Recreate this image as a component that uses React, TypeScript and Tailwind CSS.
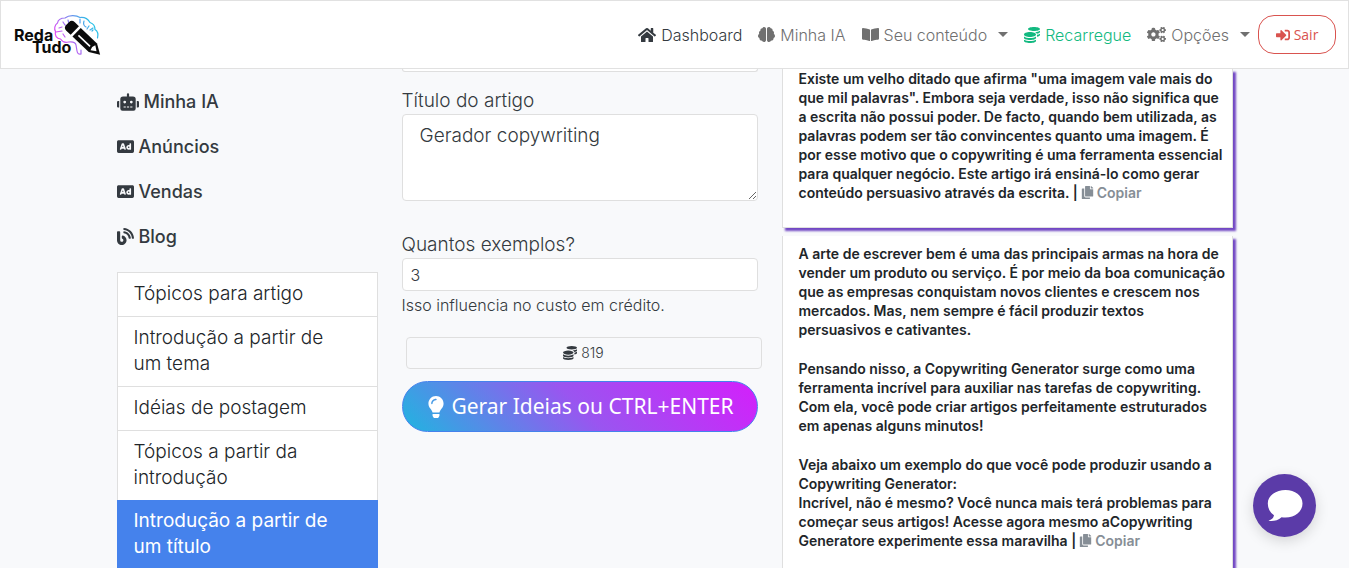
import { ReactNode } from "react";
import {
	FaAd,
	FaBlog,
	FaBookOpen,
	FaBrain,
	FaCogs,
	FaCoins,
	FaCopy,
	FaHome,
	FaLightbulb,
	FaRobot,
	FaSignInAlt,
} from "react-icons/fa";

const sections = [
	{ label: "Minha IA", icon: <FaRobot className="w-[22px] h-[18px]" /> },
	{ label: "Anúncios", icon: <FaAd className="size-[17px]" /> },
	{ label: "Vendas", icon: <FaAd className="size-[17px]" /> },
	{ label: "Blog", icon: <FaBlog className="size-[17px]" /> },
];

const blogTools = [
	"Tópicos para artigo",
	"Introdução a partir de um tema",
	"Idéias de postagem",
	"Tópicos a partir da introdução",
	"Introdução a partir de um título",
];

const firstResult = [
	`Existe um velho ditado que afirma "uma imagem vale mais do
que mil palavras". Embora seja verdade, isso não significa que
a escrita não possui poder. De facto, quando bem utilizada, as
palavras podem ser tão convincentes quanto uma imagem. É
por esse motivo que o copywriting é uma ferramenta essencial
para qualquer negócio. Este artigo irá ensiná-lo como gerar
conteúdo persuasivo através da escrita. |`,
];

const secondResult = [
	`A arte de escrever bem é uma das principais armas na hora de
vender um produto ou serviço. É por meio da boa comunicação
que as empresas conquistam novos clientes e crescem nos
mercados. Mas, nem sempre é fácil produzir textos
persuasivos e cativantes.`,
	`Pensando nisso, a Copywriting Generator surge como uma
ferramenta incrível para auxiliar nas tarefas de copywriting.
Com ela, você pode criar artigos perfeitamente estruturados
em apenas alguns minutos!`,
	`Veja abaixo um exemplo do que você pode produzir usando a
Copywriting Generator:
Incrível, não é mesmo? Você nunca mais terá problemas para
começar seus artigos! Acesse agora mesmo aCopywriting
Generatore experimente essa maravilha |`,
];

function Logo() {
	return (
		<svg width="88" height="42" viewBox="0 0 88 42" role="img" aria-label="Reda Tudo">
			<defs>
				<linearGradient id="brain" gradientUnits="userSpaceOnUse" x1="46" y1="26" x2="78" y2="6">
					<stop offset="0" stopColor="#e04bf5" />
					<stop offset="0.45" stopColor="#8f7cf0" />
					<stop offset="1" stopColor="#22c3e6" />
				</linearGradient>
			</defs>
			<g fill="none" stroke="url(#brain)" strokeWidth="1.2" strokeLinecap="round">
				<path d="M84.500 24c1-4 0-7-2.500-8.500 0-3.500-2-6-5-7C75 5 71 3 67 3.500 63 1 56 1 52 4c-4 0-7 2-7.500 5-3 2-3.500 6-2 8.500-1 4 1 7 5 7.500 2 3 5 4 8 3 4-.5 7 0 7.500 3l1 6c.5 3 2 3.500 4 3v-4" />
				<path d="M50 8l2 3 3 1M55 6l1 4M43 18l6-1M50 20l2 3M46 14l3-1M67 5v4M71 7c-1 3 0 5 2 6M76 12l-2 3M77 16l3-2M79 17l1-1" />
			</g>
			<g transform="translate(56 11) rotate(43.6)">
				<path d="M2-6h6V6H2a4 4 0 0 1-4-4v-4a4 4 0 0 1 4-4Z" fill="#0b0b0b" />
				<path d="M10.500-6H33l10 6-10 6H10.500Z" fill="#0b0b0b" />
				<path d="M14 1h16" stroke="#fff" strokeWidth="1.600" />
				<path d="M33-3.500l5 3.500-5 3.500-1-3.500Z" fill="#fff" />
			</g>
			<g fill="#0b0b0b" fontFamily="Inter, sans-serif" fontWeight="700" fontSize="16">
				<text x="1" y="27">Reda</text>
				<text x="19" y="39">Tudo</text>
			</g>
		</svg>
	);
}

function NavItem({
	icon,
	children,
	className = "text-[#707070]",
	caret = false,
}: {
	icon: ReactNode;
	children: ReactNode;
	className?: string;
	caret?: boolean;
}) {
	return (
		<a href="#" className={`flex items-center gap-[5px] px-2 whitespace-nowrap ${className}`}>
			{icon}
			<span>{children}</span>
			{caret && <span className="ml-1.5 border-x-5 border-t-5 border-x-transparent" />}
		</a>
	);
}

function Result({ paragraphs, className = "" }: { paragraphs: string[]; className?: string }) {
	return (
		<article
			className={`border border-t-0 border-[#dfdfdf] bg-white px-4 shadow-[3px_3px_2px_#7248c4] text-sm leading-[19px] font-semibold text-[#212529] flex flex-col gap-5 ${className}`}
		>
			{paragraphs.map((text, i) => {
				const lines = text.split("\n");
				return (
					<p key={i} className="whitespace-nowrap">
						{lines.map((line, j) => (
							<span key={j} className="flex items-center gap-[3px]">
								<span>{line}</span>
								{i === paragraphs.length - 1 && j === lines.length - 1 && (
									<button className="flex items-center gap-[3px] text-[#868e96]">
										<FaCopy className="size-[13px]" />
										Copiar
									</button>
								)}
							</span>
						))}
					</p>
				);
			})}
		</article>
	);
}

export default function App() {
	return (
		<div className="flex flex-col h-screen overflow-hidden bg-[#f8f9fb] font-['Inter',sans-serif] text-[#343a40]">
			<header className="relative z-10 flex shrink-0 items-center justify-between h-[69px] px-3 bg-white border border-[#e1e1e1]">
				<a href="#">
					<Logo />
				</a>
				<nav className="flex items-center text-base font-light">
					<NavItem icon={<FaHome className="size-[18px]" />} className="text-[#343a40]">
						Dashboard
					</NavItem>
					<NavItem icon={<FaBrain className="size-[17px]" />}>Minha IA</NavItem>
					<NavItem icon={<FaBookOpen className="size-[17px]" />} caret>
						Seu conteúdo
					</NavItem>
					<NavItem icon={<FaCoins className="size-4" />} className="text-[#12b980]">
						Recarregue
					</NavItem>
					<NavItem icon={<FaCogs className="size-[19px]" />} caret>
						Opções
					</NavItem>
					<button className="flex items-center justify-center gap-1 w-[78px] h-[39px] rounded-[16px] border border-[#d9534f] text-[#d9534f] text-sm font-normal font-['Open_Sans',sans-serif]">
						<FaSignInAlt className="size-3.5" />
						Sair
					</button>
				</nav>
			</header>

			<main className="grid grid-cols-12 w-full max-w-[1140px] mx-auto flex-1 min-h-0">
				<aside className="col-span-3 px-3 pt-2.5">
					{sections.map(({ label, icon }) => (
						<a key={label} href="#" className="flex items-center gap-[5px] h-[45px] text-lg font-medium">
							{icon}
							{label}
						</a>
					))}
					<ul className="mt-[13px] border border-[#dfdfdf] bg-white text-[19px] leading-[26px] font-light text-[#212529]">
						{blogTools.map((tool, i) => (
							<li
								key={tool}
								className={
									i === blogTools.length - 1
										? "-mx-px -mt-px px-px bg-[#4582ec] text-white font-normal"
										: "border-b border-[#dfdfdf]"
								}
							>
								<a href="#" className="block pl-4 pr-8 pt-2 pb-[9px]">
									{tool}
								</a>
							</li>
						))}
					</ul>
				</aside>

				<form className="col-span-4 px-3 font-light">
					<div className="h-[3px] rounded-b border border-t-0 border-[#dfdfdf] bg-white" />
					<label htmlFor="title" className="block mt-4 text-[19px] leading-[26px]">
						Título do artigo
					</label>
					<textarea
						id="title"
						defaultValue="Gerador copywriting"
						className="block w-full h-[87px] px-[17px] py-2 rounded border border-[#dfdfdf] bg-white text-[19px] leading-[26px]"
					/>
					<label htmlFor="count" className="block mt-[31px] text-[19px] leading-[26px]">
						Quantos exemplos?
					</label>
					<input
						id="count"
						defaultValue="3"
						className="block w-full h-[33px] px-2 rounded border border-[#dfdfdf] bg-white text-base"
					/>
					<p className="mt-0.5 text-base leading-6">Isso influencia no custo em crédito.</p>
					<div className="flex items-center justify-center gap-1 h-8 mt-5 ml-1 -mr-1 rounded border border-[#dfdfdf] text-sm">
						<FaCoins className="size-3.5" />
						819
					</div>
					<button
						type="button"
						className="flex items-center justify-center gap-1 w-full h-[51px] mt-3 rounded-full border border-[#4582ec] bg-[linear-gradient(45deg,#20b5e0,#9a55f0_50%,#d41ffb)] text-white text-[21px] font-normal font-['Noto_Sans',sans-serif] whitespace-nowrap"
					>
						<FaLightbulb className="size-[22px]" />
						Gerar Ideias ou CTRL+ENTER
					</button>
				</form>

				<section className="col-span-5 px-3">
					<Result paragraphs={firstResult} className="pb-[25px]" />
					<Result paragraphs={secondResult} className="mt-2 pt-2 pb-10" />
				</section>
			</main>

			<button
				aria-label="Chat"
				className="fixed z-20 right-[33px] bottom-[31px] grid place-items-center size-[63px] rounded-full bg-[#5b3ba8] shadow-[0_4px_14px_rgba(0,0,0,0.15)]"
			>
				<svg width="36" height="33" viewBox="0 0 36 33" fill="#fff">
					<path d="M18.500 1C28 1 35.500 6.500 35.500 14.500S28 28.500 18.500 28.500c-1.500 0-2.500 0-4-.3C11 31.500 6 32.500 1.500 31.800c3-1.200 5-2.800 5.500-5.600C3 23.500.8 19.500.8 14.500.8 6.500 9 1 18.500 1Z" />
				</svg>
			</button>
		</div>
	);
}
